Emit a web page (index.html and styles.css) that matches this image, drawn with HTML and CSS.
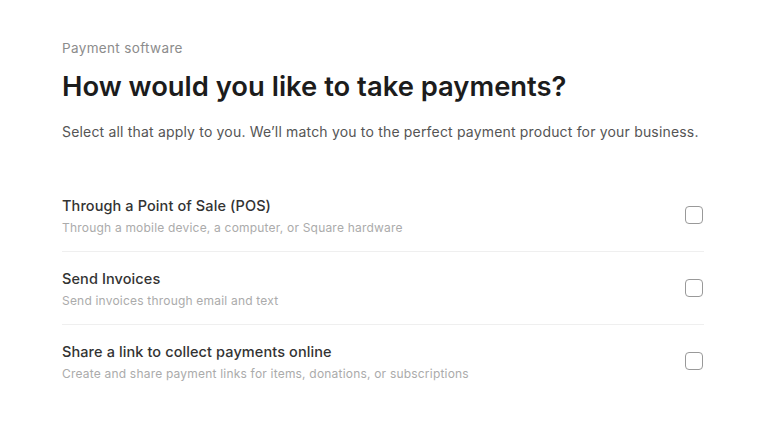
FILE: index.html
```html
<!DOCTYPE html>
<html lang="en">
<head>
    <meta charset="UTF-8">
    <meta name="viewport" content="width=device-width, initial-scale=1.0">
    <title>Payment software</title>
    <link rel="stylesheet" href="styles.css">
</head>
<body>
    <div class="panel">
        <div class="eyebrow">Payment software</div>
        <h1 class="title">How would you like to take payments?</h1>
        <p class="intro">Select all that apply to you. We’ll match you to the perfect payment product for your business.</p>

        <div class="options">
            <label class="option">
                <div class="optionText">
                    <div class="optionName">Through a Point of Sale (POS)</div>
                    <div class="optionHint">Through a mobile device, a computer, or Square hardware</div>
                </div>
                <span class="box"></span>
            </label>
            <label class="option">
                <div class="optionText">
                    <div class="optionName">Send Invoices</div>
                    <div class="optionHint">Send invoices through email and text</div>
                </div>
                <span class="box"></span>
            </label>
            <label class="option">
                <div class="optionText">
                    <div class="optionName">Share a link to collect payments online</div>
                    <div class="optionHint">Create and share payment links for items, donations, or subscriptions</div>
                </div>
                <span class="box"></span>
            </label>
        </div>
    </div>
</body>
</html>
```

FILE: styles.css
```css
* {
    margin: 0;
    padding: 0;
    box-sizing: border-box;
}
body {
    background: #ffffff;
    font-family: Inter, "Noto Sans", sans-serif;
    color: #1f1f1f;
}
.panel {
    width: 704px;
    padding: 39px 0 0 62px;
}
.eyebrow {
    font-size: 13.5px;
    line-height: 18px;
    letter-spacing: 0.35px;
    color: #8c8c8c;
}
.title {
    margin-top: 12px;
    font-size: 27.4px;
    line-height: 34px;
    font-weight: 600;
    color: #1c1c1c;
}
.intro {
    margin-top: 19px;
    font-size: 14px;
    line-height: 20px;
    letter-spacing: 0.18px;
    color: #555555;
}
.options {
    margin-top: 37px;
    display: flex;
    flex-direction: column;
}
.option {
    display: flex;
    align-items: center;
    justify-content: space-between;
    padding: 17px 0 14px;
    border-top: 1px solid #efefef;
}
.option:first-child {
    border-top: none;
}
.optionName {
    font-size: 14.5px;
    line-height: 20px;
    letter-spacing: 0.1px;
    font-weight: 500;
    color: #333333;
}
.optionHint {
    margin-top: 3px;
    font-size: 12px;
    line-height: 18px;
    letter-spacing: 0.2px;
    color: #ababab;
}
.box {
    width: 18px;
    height: 18px;
    border: 1.5px solid #999999;
    border-radius: 4px;
    margin: 0 1px 3px 0;
}
```
